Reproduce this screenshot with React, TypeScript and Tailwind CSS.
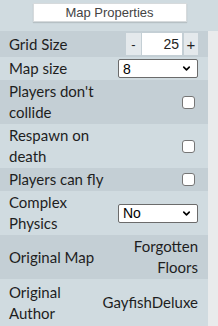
import { ChevronDown } from 'lucide-react';

const FONT = "font-['Lato','Noto_Sans',sans-serif]";

function Check() {
  return <span className="block w-[13px] h-[13px] mr-[3px] rounded-[3px] border border-[#767676] bg-white" />;
}

function Select({ value }: { value: string }) {
  return (
    <div className="flex items-center justify-between w-[80px] h-[19px] pl-[4px] pr-[5px] bg-white border border-[#6b6b6b] rounded-[2px] font-['Liberation_Sans',sans-serif] text-[14px] text-black leading-none">
      <span>{value}</span>
      <ChevronDown size={11} strokeWidth={3.5} />
    </div>
  );
}

type Row = { label: string; value: React.ReactNode; dark: boolean; h: string };

export default function App() {
  const rows: Row[] = [
    {
      label: 'Grid Size',
      dark: true,
      h: 'h-[26px]',
      value: (
        <div className="flex items-center font-['Liberation_Sans',sans-serif] text-[14px] text-[#222]">
          <span className="w-[15px] h-[22px] flex items-center justify-center bg-[#e4e9ec] text-[13px]">-</span>
          <span className="w-[40px] h-[22px] ml-[1px] flex items-center justify-end pr-[3px] bg-white">25</span>
          <span className="w-[14px] h-[22px] ml-[2px] flex items-center justify-center bg-[#e4e9ec] text-[15px]">+</span>
        </div>
      ),
    },
    { label: 'Map size', dark: false, h: 'h-[23px]', value: <Select value="8" /> },
    { label: "Players don't collide", dark: true, h: 'h-[44px]', value: <Check /> },
    { label: 'Respawn on death', dark: false, h: 'h-[44px]', value: <Check /> },
    { label: 'Players can fly', dark: true, h: 'h-[23px]', value: <Check /> },
    { label: 'Complex Physics', dark: false, h: 'h-[44px]', value: <Select value="No" /> },
    { label: 'Original Map', dark: true, h: 'h-[44px]', value: <span className="block w-[92px] text-right">Forgotten Floors</span> },
    { label: 'Original Author', dark: false, h: 'h-[47px]', value: <span className="block text-right">GayfishDeluxe</span> },
  ];

  return (
    <div className={`w-[218px] h-[326px] overflow-hidden flex flex-col bg-[#e9ebec] ${FONT}`}>
      <div className="h-[31px] shrink-0 bg-[#d0dbe0] flex justify-center pt-[3px] pl-[1px]">
        <div className="w-[154px] h-[19px] bg-white border border-[#d6dadc] shadow-[0_1px_1px_rgba(0,0,0,0.12)] flex items-center justify-center font-['Liberation_Sans',sans-serif] text-[13px] text-[#444]">
          Map Properties
        </div>
      </div>
      <div className="w-[208px] flex flex-col">
        {rows.map((r) => (
          <div
            key={r.label}
            className={`${r.h} flex items-center justify-between pl-[9px] pr-[10px] text-[15px] leading-[21px] text-[#1e1e1e] ${r.dark ? 'bg-[#c4cfd5]' : 'bg-[#d0dbe0]'}`}
          >
            <span className="w-[96px]">{r.label}</span>
            {r.value}
          </div>
        ))}
      </div>
    </div>
  );
}
